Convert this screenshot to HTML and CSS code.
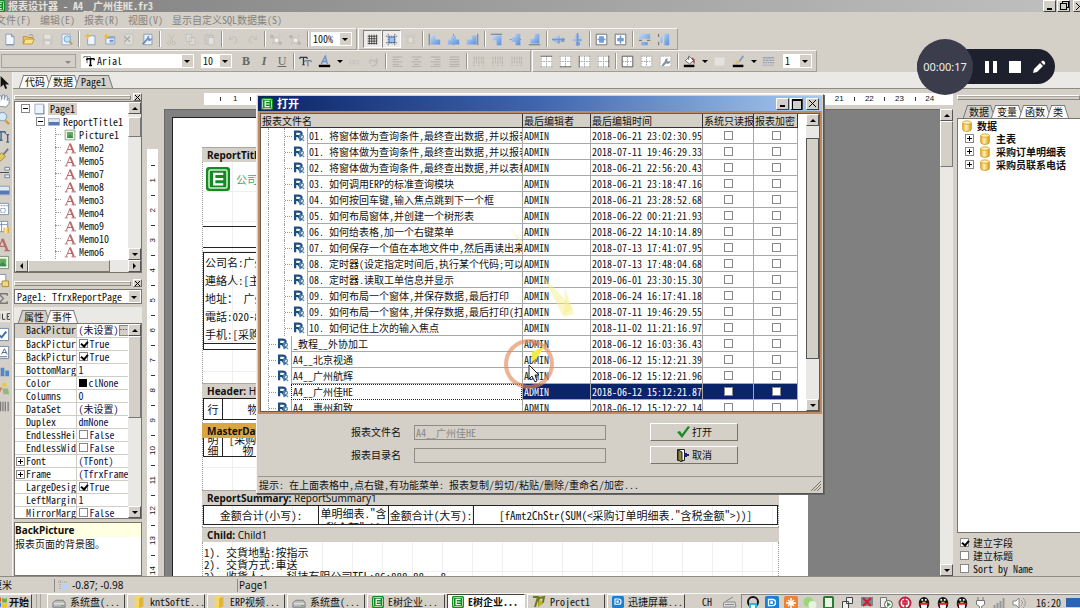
FILE: index.html
```html
<!DOCTYPE html>
<html lang="zh-CN">
<head>
<meta charset="utf-8">
<title>报表设计器 - A4__广州佳HE.fr3</title>
<link rel="stylesheet" href="styles.css">
</head>
<body>
<svg class="defs" aria-hidden="true">
  <defs>
    <linearGradient id="blue" x1="0" y1="0" x2="1" y2="1"><stop offset="0" stop-color="#c3daf7"/><stop offset="1" stop-color="#5a8fdc"/></linearGradient>
    <linearGradient id="gold" x1="0" y1="0" x2="1" y2="0"><stop offset="0" stop-color="#e9ab2e"/><stop offset=".4" stop-color="#fff0b0"/><stop offset="1" stop-color="#dc9a1c"/></linearGradient>
  </defs>
  <symbol id="logo" viewBox="0 0 16 16"><rect width="16" height="16" rx="2" fill="#138a22"/><rect x="2" y="2" width="12" height="12" rx="1" fill="none" stroke="#d8f0d0"/><path d="M11.500 4.500h-6v7h6M5.500 8h6" fill="none" stroke="#fff" stroke-width="1.500"/></symbol>
  <symbol id="new" viewBox="0 0 16 16"><path d="M3.500 1.500h7l3 3v10h-10z" fill="#f3f8fe" stroke="#7e93b4"/><path d="M10.500 1.500v3h3M4 14.500h9" fill="none" stroke="#5f83bd"/></symbol>
  <symbol id="page" viewBox="0 0 16 16"><path d="M2.500 1.500h12v13h-12z" fill="#eef4fb" stroke="#8a9bb5"/><path d="M3 14.500h12M14.500 3v12" stroke="#5f7fae"/></symbol>
  <symbol id="open" viewBox="0 0 16 16"><path d="M1.500 13.500v-9h5l1 1h6v2" fill="#f5cb58" stroke="#ad8530"/><path d="M1.500 13.500l2.500-6h11l-2.500 6z" fill="#ffe18a" stroke="#b98d30"/><path d="M9 3c2-2 4-1 5 1" fill="none" stroke="#6a86b8"/></symbol>
  <symbol id="save" viewBox="0 0 16 16"><path d="M2 2h12v12H2z" fill="#c9c7c2"/><path d="M4 2h8v5H4zM5 10h6v4H5z" fill="#e6e4df"/></symbol>
  <symbol id="preview" viewBox="0 0 16 16"><path d="M2.500 1.500h10v13h-10z" fill="#edf4fc" stroke="#94a5be"/><circle cx="9" cy="7.500" r="4" fill="#bfe2f8" stroke="#6d9cc4"/><path d="M12 10.500l3 3.500" stroke="#c99644" stroke-width="2"/></symbol>
  <symbol id="addpage" viewBox="0 0 16 16"><path d="M4.500 3.500h9v11h-9z" fill="#eef5fd" stroke="#7f93b3"/><path d="M1 4h7M4.500.5v7" stroke="#eebf3c" stroke-width="2"/></symbol>
  <symbol id="adddlg" viewBox="0 0 16 16"><path d="M3.500 4.500h11v9h-11z" fill="#eef5fd" stroke="#7f93b3"/><path d="M4 6h10M8 9h5M8 11h5" stroke="#6b93d2" stroke-width="1.500"/><path d="M1 4h6M4 1v6" stroke="#eebf3c" stroke-width="2"/></symbol>
  <symbol id="delpage" viewBox="0 0 16 16"><path d="M3.500 1.500h10v13h-10z" fill="#dedcd7" stroke="#c2c0ba"/><path d="M3 4l7 7M10 4l-7 7" stroke="#aaa8a2" stroke-width="1.500"/></symbol>
  <symbol id="setup" viewBox="0 0 16 16"><path d="M3.500 1.500h10v13h-10z" fill="#eaf2fb" stroke="#7f93b3"/><path d="M2 14l6-7" stroke="#6887b8" stroke-width="2"/><path d="M7 8l1-4 2-1v3l2 1 2-1-1 3-3 1z" fill="#7397cc"/></symbol>
  <symbol id="cut" viewBox="0 0 16 16"><path d="M5 2l5 9M11 2L6 11" stroke="#bdbbb5"/><circle cx="5" cy="12.500" r="2" fill="none" stroke="#bdbbb5"/><circle cx="11" cy="12.500" r="2" fill="none" stroke="#bdbbb5"/></symbol>
  <symbol id="copy" viewBox="0 0 16 16"><path d="M2.500 1.500h7v9h-7zM6.500 5.500h7v9h-7z" fill="#dddbd6" stroke="#bfbdb7"/></symbol>
  <symbol id="paste" viewBox="0 0 16 16"><path d="M2.500 2.500h10v11h-10z" fill="#cfcdc8" stroke="#bfbdb7"/><path d="M6.500 5.500h7v9h-7z" fill="#e4e2de" stroke="#bfbdb7"/></symbol>
  <symbol id="undo" viewBox="0 0 16 16"><path d="M3 4v4h4M3 8c3-5 9-4 9 1 0 2-1 3-3 4" fill="none" stroke="#c4c2bc" stroke-width="1.500"/></symbol>
  <symbol id="redo" viewBox="0 0 16 16"><path d="M13 4v4H9M13 8c-3-5-9-4-9 1 0 2 1 3 3 4" fill="none" stroke="#c4c2bc" stroke-width="1.500"/></symbol>
  <symbol id="group" viewBox="0 0 16 16"><path d="M1 3h3v3H1zM11 11h3v3h-3zM11 3h2M3 12v2" fill="#b8b6b0" stroke="#b8b6b0"/><path d="M5 6h6v6H5z" fill="#f0eeea" stroke="#b8b6b0"/></symbol>
  <symbol id="grid" viewBox="0 0 16 16"><path d="M4 2v12M7 2v12M10 2v12M13 2v12M2 4h12M2 7h12M2 10h12M2 13h12" stroke="#333"/></symbol>
  <symbol id="snap" viewBox="0 0 16 16"><path d="M5 5h7v7H5z" fill="#9cc0ef" stroke="#416fae"/><path d="M4 1v14M12 1v14M1 4h14M1 12h14" stroke="#4b5b75" stroke-dasharray="2 1"/></symbol>
  <symbol id="fit" viewBox="0 0 16 16"><path d="M5 5h6v7H5z" fill="#e0ded9" stroke="#c2c0ba"/><path d="M2 3h12M3 1v13M13 1v13" stroke="#c2c0ba" stroke-dasharray="2 2"/></symbol>
  <symbol id="al" viewBox="0 0 16 16"><path d="M1.500 1v14" stroke="#4d6180"/><path d="M3 3h6v5H3zM3 8h12v6H3z" fill="url(#blue)"/></symbol>
  <symbol id="ac" viewBox="0 0 16 16"><path d="M8 1v14" stroke="#5a7fb5"/><path d="M5 3h6v5H5zM1 8h14v6H1z" fill="url(#blue)"/></symbol>
  <symbol id="ar" viewBox="0 0 16 16"><path d="M14.500 1v14" stroke="#4d6180"/><path d="M7 3h6v5H7zM1 8h12v6H1z" fill="url(#blue)"/></symbol>
  <symbol id="at" viewBox="0 0 16 16"><path d="M1 1.500h14" stroke="#4d6180"/><path d="M3 3h5v6H3zM8 3h6v12H8z" fill="url(#blue)"/></symbol>
  <symbol id="am" viewBox="0 0 16 16"><path d="M1 8h14" stroke="#5a7fb5"/><path d="M3 5h5v6H3zM8 1h6v14H8z" fill="url(#blue)"/></symbol>
  <symbol id="ab" viewBox="0 0 16 16"><path d="M1 14.500h14" stroke="#4d6180"/><path d="M3 7h5v6H3zM8 1h6v12H8z" fill="url(#blue)"/></symbol>
  <symbol id="sh" viewBox="0 0 16 16"><path d="M2 5h3v6H2zM6 3h4v10H6zM11 6h4v5h-4z" fill="url(#blue)"/><path d="M0 8h16" stroke="#7297cd" stroke-width="2"/></symbol>
  <symbol id="sv" viewBox="0 0 16 16"><path d="M5 2h5v4H5zM2 7h11v3H2zM6 11h5v4H6z" fill="url(#blue)"/><path d="M8 0v16" stroke="#7297cd" stroke-width="2"/></symbol>
  <symbol id="ch" viewBox="0 0 16 16"><path d="M1.500 1.500h13v13h-13z" fill="#fff" stroke="#58606d"/><path d="M5 4h6v8H5zM3 7h10v2H3z" fill="#6f9ddd"/></symbol>
  <symbol id="cv" viewBox="0 0 16 16"><path d="M1.500 1.500h13v13h-13z" fill="#fff" stroke="#58606d"/><path d="M4 6h8v4H4zM7 3h2v10H7z" fill="#6f9ddd"/></symbol>
  <symbol id="sw" viewBox="0 0 16 16"><path d="M1 1h14v6H1zM4 11h8v4H4z" fill="url(#blue)"/><path d="M1 9h4M11 9h4" stroke="#555"/></symbol>
  <symbol id="shh" viewBox="0 0 16 16"><path d="M9 1h6v14H9zM4 4h3v8H4z" fill="url(#blue)"/><path d="M2 1v4M2 11v4" stroke="#555"/></symbol>
  <symbol id="tt" viewBox="0 0 16 16"><path d="M1 3h9M5.500 3v9M1 3v2M10 3v2M4 12h3" fill="none" stroke="#2c3646" stroke-width="1.500"/><path d="M7 7h8M11 7v7M7 7v2M15 7v2" fill="none" stroke="#69819f" stroke-width="1.500"/></symbol>
  <symbol id="ttf" viewBox="0 0 16 16"><path d="M1 2h9M5.500 2v9M1 2v2M10 2v2" fill="none" stroke="#888" stroke-width="1.500"/><path d="M5 5h10M10 5v9M5 5v2M15 5v2M8 14h4" fill="none" stroke="#000" stroke-width="2"/></symbol>
  <symbol id="fc" viewBox="0 0 16 16"><path d="M4 11L9 1.500 11.500 11M5.500 8H11" fill="none" stroke="#6b93cb" stroke-width="1.800"/><path d="M1 12h14v3H1z"/></symbol>
  <symbol id="hl" viewBox="0 0 16 16"><path d="M2 7h5v4H2zM8 7h5v4H8z" fill="none" stroke="#c3c1bb"/></symbol>
  <symbol id="rot" viewBox="0 0 16 16"><path d="M4 11c-2-4 1-6 3-4s3 1 5-2c2 6-3 10-7 8" fill="none" stroke="#bcbab4" stroke-width="1.500"/></symbol>
  <symbol id="tl" viewBox="0 0 16 16"><path d="M2 2.500h12M2 5.500h7M2 8.500h12M2 11.500h8M2 14h12" stroke="#aaa8a2"/></symbol>
  <symbol id="tc" viewBox="0 0 16 16"><path d="M2 2.500h12M5 5.500h6M2 8.500h12M5 11.500h6M2 14h12" stroke="#aaa8a2"/></symbol>
  <symbol id="tr" viewBox="0 0 16 16"><path d="M2 2.500h12M7 5.500h7M2 8.500h12M6 11.500h8M2 14h12" stroke="#aaa8a2"/></symbol>
  <symbol id="tj" viewBox="0 0 16 16"><path d="M2 2.500h12M2 5.500h12M2 8.500h12M2 11.500h12M2 14h12" stroke="#aaa8a2"/></symbol>
  <symbol id="vt" viewBox="0 0 16 16"><path d="M2.500 2v12M5.500 2v8M8.500 2v12M11.500 2v8M14 2v12" stroke="#b0aea8" stroke-dasharray="4 1"/></symbol>
  <symbol id="bd" viewBox="0 0 16 16"><path d="M1 1h14v14H1z" fill="#fff"/><path d="M1 8h14M8 1v14M1.500 1v14M14.500 1v14M1 14.500h14" stroke="#999" stroke-dasharray="2 1"/><path d="M1 1.500h14" stroke="#444"/></symbol>
  <symbol id="bb" viewBox="0 0 16 16"><path d="M1 1h14v14H1z" fill="#fff"/><path d="M1 8h14M8 1v14M1.500 1v14M14.500 1v14M1 1.500h14" stroke="#999" stroke-dasharray="2 1"/><path d="M1 14.500h14" stroke="#444"/></symbol>
  <symbol id="bl" viewBox="0 0 16 16"><path d="M1 1h14v14H1z" fill="#fff"/><path d="M1 8h14M8 1v14M14.500 1v14M1 1.500h14M1 14.500h14" stroke="#999" stroke-dasharray="2 1"/><path d="M1.500 1v14" stroke="#444"/></symbol>
  <symbol id="br" viewBox="0 0 16 16"><path d="M1 1h14v14H1z" fill="#fff"/><path d="M1 8h14M8 1v14M1.500 1v14M1 1.500h14M1 14.500h14" stroke="#999" stroke-dasharray="2 1"/><path d="M14.500 1v14" stroke="#444"/></symbol>
  <symbol id="ba" viewBox="0 0 16 16"><path d="M1.500 1.500h13v13h-13z" fill="#fff" stroke="#444"/><path d="M2 8h12M8 2v12" stroke="#999" stroke-dasharray="2 1"/></symbol>
  <symbol id="bn" viewBox="0 0 16 16"><path d="M1.500 1.500h13v13h-13zM2 8h12M8 2v12" fill="#fff" stroke="#999" stroke-dasharray="2 1"/></symbol>
  <symbol id="be" viewBox="0 0 16 16"><path d="M1.500 1.500h13v13h-13z" fill="#fff" stroke="#aaa" stroke-dasharray="2 1"/><path d="M3 13l4-5 1-3 3-1-1 3 2 1 2-1-1 3-3 1-1-1-4 4z" fill="#8791a4"/></symbol>
  <symbol id="bucket" viewBox="0 0 16 16"><path d="M3 7l5-5 5 5-5 4z" fill="#fff" stroke="#555"/><path d="M7 1v5" stroke="#555"/><path d="M11 3c4 1 4 4 3 8-2-1-1-4-3-6z" fill="#a04a4a"/><path d="M1 12h13v3H1z"/></symbol>
  <symbol id="brush" viewBox="0 0 16 16"><path d="M14 1l-5 7" stroke="#7f9ab8" stroke-width="2"/><path d="M4 11c1-4 3-5 5-3s1 3-5 3z" fill="#d9c46c"/><path d="M1 12h13v3H1z"/></symbol>
  <symbol id="lines" viewBox="0 0 16 16"><path d="M1 3.500h14" stroke="#6d7fae"/><path d="M1 6.500h14" stroke="#6d7fae" stroke-dasharray="3 1"/><path d="M1 9.500h14" stroke="#6d7fae" stroke-dasharray="2 1"/><path d="M1 12.500h14" stroke="#6d7fae" stroke-dasharray="1 1"/></symbol>
  <symbol id="fill2" viewBox="0 0 16 16"><path d="M2 3h12v10H2z" fill="#e4e2de"/></symbol>
  <symbol id="cursor" viewBox="0 0 16 16"><path d="M6 1v12l3-3 2 5 2-1-2-4h4z" fill="#111"/></symbol>
  <symbol id="hand" viewBox="0 0 16 16"><path d="M4 14L2 8l2-1 1 2V3h2v4l1-5h2v5l1-4h2v5l1-2h1v5l-3 4z" fill="#fff" stroke="#8290a8"/></symbol>
  <symbol id="glass" viewBox="0 0 16 16"><circle cx="8" cy="6" r="4.500" fill="#d5ebfa" stroke="#7b93ae"/><path d="M11 10l4 4" stroke="#d39a3a" stroke-width="2.500"/></symbol>
  <symbol id="ti" viewBox="0 0 16 16"><path d="M2 3h9M6.500 3v9M2 3v2M11 3v2M5 12h3M12 6h3M12 14h3M13.500 6v8" fill="none" stroke="#40658f" stroke-width="1.500"/></symbol>
  <symbol id="paint" viewBox="0 0 16 16"><path d="M14 2L9 8" stroke="#6f7780" stroke-width="2"/><path d="M2 12l5-6 4 4-5 5z" fill="#ddc95c" stroke="#9b8c3c"/></symbol>
  <symbol id="band" viewBox="0 0 16 16"><path d="M.5 3.500h15v9H.5z" fill="#dfe9f6" stroke="#8c9cb6"/><path d="M1 8h14v4H1z" fill="#5579b4"/></symbol>
  <symbol id="insert" viewBox="0 0 16 16"><path d="M10.500 2.500h5v3h-5zM10.500 10.500h5v3h-5z" fill="#eaf2fb" stroke="#6e7f99"/><path d="M1 8h14M4 6v4" stroke="#444"/></symbol>
  <symbol id="box" viewBox="0 0 16 16"><path d="M2.500 2.500h12v12h-12z" fill="#fff" stroke="#7890b0"/><path d="M3 5h11M6 8h5v4H6z" fill="none" stroke="#7890b0" stroke-dasharray="2 1"/></symbol>
  <symbol id="dbox" viewBox="0 0 16 16"><path d="M2.500 2.500h11v11h-11z" fill="#fff" stroke="#7890b0"/><path d="M3 6h10M7 3v10" stroke="#7890b0"/><path d="M9 9h6v6H9z" fill="url(#gold)"/></symbol>
  <symbol id="memo" viewBox="0 0 16 16"><path d="M3 14L8 2M5 10h6M1 14.500h4M10 14.500h6" fill="none" stroke="#b96b6b" stroke-width="1.300"/><path d="M8 2l5 12" stroke="#b96b6b" stroke-width="2.600"/></symbol>
  <symbol id="pic" viewBox="0 0 16 16"><path d="M1.500 1.500h13v13h-13z" fill="#eef6ea" stroke="#77906e"/><path d="M4 4h8v8H4z" fill="#69a95c"/><path d="M4 12l4-5 4 4v1z" fill="#3d8c56"/></symbol>
  <symbol id="sub" viewBox="0 0 16 16"><path d="M3.500 1.500h8v10h-8z" fill="#fff" stroke="#7d8ea7"/><path d="M7.500 8.500h7v6h-7z" fill="#f2d680" stroke="#a68b3b"/></symbol>
  <symbol id="sigma" viewBox="0 0 16 16"><path d="M13 5V3H4l5 5-5 5h9v-2" fill="none" stroke="#777" stroke-width="1.500"/></symbol>
  <symbol id="ole" viewBox="0 0 16 16"><path d="M0 2h16v12H0z" fill="#e9e7e2"/><path d="M2 5h3v6H2zM8 5v6h3M16 5h-3v6h3M13 8h2" fill="none" stroke="#333"/></symbol>
  <symbol id="chk" viewBox="0 0 16 16"><path d="M1.500 1.500h13v13h-13z" fill="#fff" stroke="#6c88ab"/><path d="M4 8l3 3 5-6" fill="none" stroke="#3b6ba4" stroke-width="2"/></symbol>
  <symbol id="rich" viewBox="0 0 16 16"><path d="M1.500 1.500h13v13h-13z" fill="#fff" stroke="#6c88ab"/><path d="M7 10l3-6 3 6M8 8h4M4 12.500h9" fill="none" stroke="#567"/></symbol>
  <symbol id="chart" viewBox="0 0 16 16"><path d="M1 2h4v12H1zM6 5h4v9H6zM11 8h4v6h-4z" fill="#5087c5"/></symbol>
  <symbol id="shape" viewBox="0 0 16 16"><path d="M2 7h6l-3 6z" fill="#d77a5c"/><circle cx="10" cy="4" r="2.500" fill="#e8c94a"/><path d="M8 8h6l1 6H9z" fill="#91b87a"/></symbol>
  <symbol id="bar" viewBox="0 0 16 16"><path d="M3.500 3v10M6 3v10M8.500 3v10M11 3v10M14 3v10" stroke="#777" stroke-width="1.300"/></symbol>
  <symbol id="rr" viewBox="0 0 14 14"><path d="M2.500 12V2H7c4 0 4 5 0 5H3M6 7l4 5" fill="none" stroke="#1d4c7d" stroke-width="2.600"/><path d="M8 13V6h2c3 0 3 4 0 4M10 10l3 3" fill="none" stroke="#5d8bb5" stroke-width="1.500"/></symbol>
  <symbol id="db" viewBox="0 0 14 14"><path d="M2 3v8c0 3 10 3 10 0V3z" fill="url(#gold)" stroke="#cc9426"/><ellipse cx="7" cy="3" rx="5" ry="2" fill="#fff0b8" stroke="#d6a130"/></symbol>
  <symbol id="folder" viewBox="0 0 16 16"><path d="M3 1h7v14H3z" fill="#f4d66c"/><path d="M8 4l5-2v11l-5 2z" fill="#e2b43c"/></symbol>
  <symbol id="disk" viewBox="0 0 16 16"><path d="M1 9l3-3h9l2 3v5H1z" fill="#b9bcbc" stroke="#777"/><path d="M2 10h12" stroke="#f4f4f4"/><path d="M11 12h2" stroke="#3c9a3c"/></symbol>
  <symbol id="penguin" viewBox="0 0 16 16"><ellipse cx="8" cy="8.500" rx="6" ry="7.500" fill="#151515"/><ellipse cx="8" cy="11" rx="3.500" ry="4" fill="#fff"/><path d="M5 4.500h2M9 4.500h2" stroke="#fff" stroke-width="2"/><path d="M3 8h10v2H3z" fill="#d22"/><path d="M6 6.500h4v1H6z" fill="#f2a51c"/></symbol>
  <symbol id="rec" viewBox="0 0 16 16"><rect width="16" height="16" rx="2" fill="#1d7fd0"/><path d="M4 4h5c4 0 4 7 0 7H4z" fill="none" stroke="#fff" stroke-width="1.500"/><path d="M6 6h3v3H6z" fill="#fff"/></symbol>
</svg>

<div class="app">
  <header class="titlebar">
    <svg class="i12"><use href="#logo"/></svg>
    <h1>报表设计器 - A4__广州佳HE.fr3</h1>
    <span class="winbtns"><button class="wb min" aria-label="最小化"></button><button class="wb rest" aria-label="还原"></button><button class="wb shut" aria-label="关闭"></button></span>
  </header>
  <nav class="menubar"><button>文件(F)</button><button>编辑(E)</button><button>报表(R)</button><button>视图(V)</button><button>显示自定义SQL数据集(S)</button></nav>

  <div class="toolrow">
    <div class="toolbar" data-icons="new open save preview | addpage adddlg delpage setup | cut copy paste | undo redo | group group |"><label class="combo zoomsel"><select aria-label="缩放"><option>100%</option></select></label></div>
    <div class="toolbar" data-icons="grid snap fit | al ac ar | at am ab | sh sv | ch cv | sw shh"></div>
  </div>
  <div class="toolrow">
    <div class="toolbar">
      <label class="combo style off"><select aria-label="样式" disabled><option></option></select></label>
      <label class="combo font"><svg class="i12"><use href="#ttf"/></svg><select aria-label="字体"><option>Arial</option></select></label>
      <label class="combo size"><select aria-label="字号"><option>10</option></select></label>
      <button class="tb letter b" aria-label="粗体">B</button><button class="tb letter i" aria-label="斜体">I</button><button class="tb letter u" aria-label="下划线">U</button>
      <span class="tools" data-icons="| tt fc v hl rot | tl tc tr tj | vt vt vt"></span>
    </div>
    <div class="toolbar">
      <span class="tools" data-icons="bd bb bl br | ba bn be | bucket v fill2 brush v lines"></span>
      <label class="combo width"><select aria-label="线宽"><option>1</option></select></label>
    </div>
  </div>

  <div class="work">
    <div class="palette" data-tools="cursor hand glass ti paint insert band box dbox memo pic sub sigma ole chk rich chart shape bar"></div>
    <div class="content">
      <div class="pagetabs"><button class="tab">代码</button><button class="tab">数据</button><button class="tab on">Page1</button></div>
      <div class="panes">
        <aside class="left">
          <div class="grip"><i></i><button class="shut" aria-label="关闭"></button></div>
          <div class="treebox">
            <div class="treemain">
              <ul class="tree" id="objtree"></ul>
              <div class="vs objs"><button class="up" aria-label="上"></button><i class="thumb"></i><button class="down" aria-label="下"></button></div>
            </div>
            <div class="hs"><button class="lt" aria-label="左"></button><i class="thumb"></i><button class="rt" aria-label="右"></button></div>
          </div>
          <div class="grip second"><i></i><button class="shut" aria-label="关闭"></button></div>
          <label class="combo object"><select aria-label="对象"><option>Page1: TfrxReportPage</option></select></label>
          <div class="smalltabs"><button class="tab on">属性</button><button class="tab">事件</button></div>
          <div class="inspector">
            <table class="props" id="props"></table>
            <div class="vs insp"><button class="up" aria-label="上"></button><i class="thumb"></i><button class="down" aria-label="下"></button></div>
          </div>
          <div class="hint"><b>BackPicture</b><p>报表页面的背景图。</p></div>
        </aside>

        <main class="design">
          <div class="hruler" id="hruler"></div>
          <div class="vruler" id="vruler"></div>
          <div class="canvas">
            <div class="paper">
              <div class="band"><b>ReportTitle:</b> ReportTitle1</div>
              <div class="bandbody title">
                <div class="brand"><svg><use href="#logo"/></svg><span>公司</span></div>
                <div class="blankrow"></div>
                <div class="contact"><p>公司名:广州</p><p>連絡人:[主表</p><p>地址： 广州市</p><p>電話:020-8</p><p>手机:[采购订</p></div>
              </div>
              <div class="band"><b>Header:</b> Header1</div>
              <div class="bandbody head"><div class="cells"><span class="no">行</span><span class="item">物</span></div></div>
              <div class="band master"><b>MasterData:</b> MasterData1</div>
              <div class="bandbody detail"><div class="cells"><span class="no">明细</span><span class="item">[采购订<br>物</span></div></div>
              <div class="band"><b>ReportSummary:</b> ReportSummary1</div>
              <div class="bandbody sum"><div class="cells"><span class="c1">金额合计(小写):</span><span class="c2">单明细表."含税金额">)]</span><span class="c3">金额合计(大写):</span><span class="c4">[fAmt2ChStr(SUM(&lt;采购订单明细表."含税金额"&gt;))]</span></div></div>
              <div class="band"><b>Child:</b> Child1</div>
              <div class="bandbody child"><p>1). 交貨地點:按指示</p><p>2). 交貨方式:車送</p><p>3). 收貨人:    科技有限公司TEL:86:888-88   8</p></div>
            </div>
          </div>
          <div class="vs page"><button class="up" aria-label="上"></button><i class="thumb"></i><button class="down" aria-label="下"></button></div>
        </main>

        <aside class="right">
          <div class="grip"><i></i></div>
          <div class="smalltabs"><button class="tab on">数据</button><button class="tab">变量</button><button class="tab">函数</button><button class="tab">类</button></div>
          <ul class="datatree">
            <li class="root"><svg class="i14"><use href="#db"/></svg>数据</li>
            <li><i class="pm plus"></i><svg class="i14"><use href="#db"/></svg>主表</li>
            <li><i class="pm plus"></i><svg class="i14"><use href="#db"/></svg>采购订单明细表</li>
            <li><i class="pm plus"></i><svg class="i14"><use href="#db"/></svg>采购员联系电话</li>
          </ul>
          <div class="opts"><label><input type="checkbox" checked>建立字段</label><label><input type="checkbox">建立标题</label><label><input type="checkbox">Sort by Name</label></div>
        </aside>
      </div>
    </div>
  </div>

  <footer class="status"><span class="unit">厘米</span><span class="pos"><svg class="i12"><path d="M1 3h10M3 1v10" stroke="#999" stroke-dasharray="1 1"/><rect x="5" y="5" width="6" height="6" rx="2" fill="#b9d2f2"/></svg>-0.87; -0.98</span><span class="pg">Page1</span></footer>

  <footer class="taskbar">
    <button class="start"><svg class="i14" viewBox="0 0 14 14"><path d="M1 3c2-2 4-1 5 0v4c-1-1-3-1-5 0z" fill="#e05a2b"/><path d="M7 3c2 1 4 1 5 0v4c-1 1-3 1-5 0z" fill="#6bb13c"/><path d="M1 8c2-1 4-1 5 0v4c-1-1-3-1-5 0z" fill="#3c7fd0"/><path d="M7 8c2 1 4 1 5 0v4c-1 1-3 1-5 0z" fill="#f1c232"/></svg>开始</button>
    <span class="tsep"></span>
    <button class="task"><svg class="i14"><use href="#disk"/></svg>系统盘(...</button>
    <button class="task"><svg class="i14"><use href="#folder"/></svg>kntSoftE...</button>
    <button class="task"><svg class="i14"><use href="#folder"/></svg>ERP视频...</button>
    <button class="task"><svg class="i14"><use href="#disk"/></svg>系统盘(...</button>
    <button class="task"><svg class="i12"><use href="#logo"/></svg>E树企业...</button>
    <button class="task cur"><svg class="i12"><use href="#logo"/></svg>E树企业...</button>
    <button class="task"><svg class="i14" viewBox="0 0 14 14"><path d="M1 2h5L3 12M7 3l5-1-1 5-4 3z" fill="none" stroke="#6a7a18" stroke-width="2"/><path d="M7 4l4 4-5 4z" fill="#c8b22a"/></svg>Project1</button>
    <button class="task"><svg class="i12"><use href="#rec"/></svg>迅捷屏幕...</button>
    <span class="lang">CH</span>
    <svg class="i14 kbd" viewBox="0 0 14 14"><path d="M1 7h11l1 5H0z" fill="#ddd" stroke="#888"/><path d="M3 6l7-4M2 9.500h9" stroke="#888"/></svg>
    <div class="tray">
      <svg class="i14" viewBox="0 0 14 14"><circle cx="7" cy="6" r="5" fill="none" stroke="#111" stroke-width="2"/><path d="M3 7h8v6H3z" fill="#35b4d8"/><path d="M5 9h4v3H5z" fill="#fff"/></svg>
      <svg class="i14"><use href="#rec"/></svg>
      <svg class="i14" viewBox="0 0 14 14"><rect width="14" height="14" rx="2" fill="#e98435"/><path d="M7 2v10M2 7h10M4 4l6 6M10 4l-6 6" stroke="#fff" stroke-width="1.500"/></svg>
      <svg class="i14" viewBox="0 0 14 14"><circle cx="5.500" cy="6" r="5" fill="#9bd67c"/><circle cx="9.500" cy="9" r="4" fill="#e6f3df"/></svg>
      <svg class="i14" viewBox="0 0 14 14"><rect x="2" y="1" width="9" height="11" rx="1" fill="#e8f4e6" stroke="#257a35" stroke-width="2"/></svg>
      <svg class="i14" viewBox="0 0 14 14"><path d="M5.500 1.500h6v6h-6zM1.500 5.500h6v7h-6z" fill="#eee" stroke="#444"/></svg>
      <svg class="i14" viewBox="0 0 14 14"><path d="M1 1h12v9H1z" fill="#7c8a90"/><path d="M3 2l8 8M11 2l-8 8" stroke="#d01c2c" stroke-width="2"/></svg>
      <svg class="i14" viewBox="0 0 14 14"><path d="M1.500 1.500h6v10h-6z" fill="#eee" stroke="#777"/><circle cx="9.500" cy="8.500" r="4" fill="#fff" stroke="#555"/><path d="M8 6l4 2.500L8 11z" fill="#2c9a3a"/></svg>
      <svg class="i14" viewBox="0 0 14 14"><circle cx="7" cy="7" r="5.500" fill="#fff" stroke="#c22040" stroke-width="2"/><path d="M5 5h4v3H5zM7 2v10" fill="none" stroke="#c22040" stroke-width="1.500"/></svg>
      <svg class="i14"><use href="#penguin"/></svg><svg class="i14"><use href="#penguin"/></svg><svg class="i14"><use href="#penguin"/></svg>
      <svg class="i14" viewBox="0 0 14 14"><path d="M4 1v4M9 1v4M2.500 4.500h8v4l-3 2v3h-2v-3l-3-2z" fill="#fff" stroke="#777"/></svg>
      <svg class="i14" viewBox="0 0 14 14"><path d="M1.500 9v4M4.500 7v6M7.500 5v8M10.500 2v11" stroke="#999" stroke-width="2"/></svg>
      <svg class="i14" viewBox="0 0 14 14"><path d="M1 5h3l3-3v10L4 9H1z" fill="#fff" stroke="#888"/><path d="M9 4c2 2 2 4 0 6M11 2c3 3 3 7 0 10" fill="none" stroke="#999"/></svg>
      <time>16:20</time>
      <svg class="i14" viewBox="0 0 14 14"><path d="M0 2h14v9H0z" fill="#2c62b8"/></svg>
    </div>
  </footer>

  <section class="dialog" role="dialog" aria-label="打开">
    <header><svg class="i12"><use href="#logo"/></svg><h2>打开</h2><span class="winbtns"><button class="wb min" aria-label="最小化"></button><button class="wb max" aria-label="最大化"></button><button class="wb shut" aria-label="关闭"></button></span></header>
    <div class="frame">
      <div class="scroller">
        <table class="files">
          <colgroup><col class="k1"><col class="k2"><col class="k3"><col class="k4"><col class="k5"></colgroup>
          <thead><tr><th>报表文件名</th><th>最后编辑者</th><th>最后编辑时间</th><th>系统只读报</th><th>报表加密</th></tr></thead>
          <tbody id="files"></tbody>
        </table>
      </div>
      <div class="vs dlg"><button class="up" aria-label="上"></button><i class="thumb"></i><button class="down" aria-label="下"></button></div>
    </div>
    <form class="form">
      <label for="fname">报表文件名</label><input id="fname" value="A4__广州佳HE" disabled>
      <button type="button"><svg class="i14" viewBox="0 0 14 14"><path d="M1 7l3-1 2 3 6-8 2 1-8 11z" fill="#1e8a2c"/></svg>打开</button>
      <label for="dname">报表目录名</label><input id="dname" disabled>
      <button type="button"><svg class="i14" viewBox="0 0 14 14"><path d="M1.500 1.500h7v11h-7z" fill="#fff" stroke="#222"/><path d="M2 2l4 2v10l-4-2z" fill="#8d8a32" stroke="#222"/><path d="M8 7h5M10 5v4" stroke="#16208c" stroke-width="2"/></svg>取消</button>
    </form>
    <p class="tip">提示: 在上面表格中,点右键,有功能菜单: 报表复制/剪切/粘贴/删除/重命名/加密...</p>
    <svg class="sizegrip" viewBox="0 0 10 10"><path d="M0 10L10 0M3 10l7-7M6 10l4-4" stroke="#77756f"/></svg>
  </section>

  <svg class="pointer" viewBox="0 0 84 170" aria-hidden="true"><path d="M5 2l17 18-2 2zM40 52l20 40 10-8z" fill="#f5f08a" opacity=".5"/><path d="M62 64l9 26-10 3z" fill="#f5f08a" opacity=".5"/><circle cx="26" cy="140" r="23" fill="none" stroke="#e58a5c" stroke-opacity=".65" stroke-width="4"/><path d="M29 128l13-6-9 13-5 3z" fill="#f2ec4a"/><path d="M26 141v14l3-3 3 6 2-1-2-6h4z" fill="#fff" stroke="#222"/></svg>

  <div class="recorder">
    <div class="clock">00:00:17</div>
    <button aria-label="暂停"><svg viewBox="0 0 14 14"><path d="M1 1h4v12H1zM9 1h4v12H9z" fill="#fff"/></svg></button>
    <button aria-label="停止"><svg viewBox="0 0 14 14"><path d="M1 1h12v12H1z" fill="#fff"/></svg></button>
    <button aria-label="画笔"><svg viewBox="0 0 14 14"><path d="M1 13l1-4 6-6 3 3-6 6zM9 2l1-1c1-1 4 1 3 3l-1 1z" fill="#fff"/></svg></button>
  </div>
</div>
<script src="script.js"></script>
</body>
</html>
```
FILE: styles.css
```css
* { box-sizing: border-box; margin: 0; padding: 0; }
html, body { height: 100%; overflow: hidden; }
body {
  background: #d4d0c8; color: #111;
  font: 10px/12px "Noto Sans Mono CJK SC", "Noto Sans CJK SC", monospace;
  font-feature-settings: "hwid";
}
button, input, select { font: inherit; font-feature-settings: inherit; color: inherit; border: 0; background: none; border-radius: 0; }
ul { list-style: none; }
svg { flex: none; display: block; }
.defs { position: absolute; width: 0; height: 0; }
.i12 { width: 12px; height: 12px; }
.i14 { width: 14px; height: 14px; }
.app { position: relative; height: 100vh; display: flex; flex-direction: column; overflow: hidden; }

/* main window caption and menu */
.titlebar { flex: none; height: 12px; display: flex; align-items: center; background: linear-gradient(90deg, #808080, #c0c0c0); overflow: hidden; }
.titlebar .i12 { margin-left: -7px; }
.titlebar h1 { font-size: 10px; line-height: 12px; color: #e6e3dc; margin-left: 3px; flex: 1; white-space: pre; }
.winbtns { display: flex; gap: 1px; }
.wb { width: 13px; height: 12px; background: #d4d0c8; border: 1px solid; border-color: #fff #404040 #404040 #fff; display: grid; place-items: center; }
.min::before { content: ""; width: 5px; height: 2px; background: #000; margin-top: 5px; }
.max::before { content: ""; width: 8px; height: 8px; border: 1px solid #000; border-top-width: 2px; }
.rest::before { content: ""; width: 5px; height: 5px; border: 1px solid #000; box-shadow: 2px -2px 0 -1px #d4d0c8, 2px -2px 0 0 #000; }
.shut::before { content: ""; width: 7px; height: 7px; background: linear-gradient(45deg, transparent 44%, #000 44% 56%, transparent 56%), linear-gradient(-45deg, transparent 44%, #000 44% 56%, transparent 56%); }
.titlebar .winbtns { margin-right: -6px; }
.wb.shut { margin-left: 2px; }
.menubar { flex: none; height: 16px; display: flex; gap: 9px; align-items: center; margin-left: -4px; color: #85827c; }
.menubar button { white-space: nowrap; }

/* toolbars */
.toolrow { flex: none; height: 22px; display: flex; }
.toolbar { display: flex; align-items: center; height: 22px; padding-right: 4px; border: 1px solid; border-color: #f6f5f2 #a19e97 #a19e97 #f6f5f2; border-left: 0; }
.toolbar + .toolbar { padding-left: 4px; border-left: 1px solid #fff; margin-left: 1px; }
.tools { display: flex; align-items: center; }
.tb { width: 19px; height: 18px; display: grid; place-items: center; flex: none; }
.tb svg { width: 13px; height: 13px; }
.tb.held { background: #eeece8; border: 1px solid; border-color: #808080 #fff #fff #808080; }
.arrow { width: 11px; height: 18px; display: grid; place-items: center; }
.arrow::before { content: ""; border: 3px solid transparent; border-top-color: #000; border-bottom: 0; }
.sep { width: 5px; height: 16px; flex: none; background: linear-gradient(90deg, transparent 2px, #98958e 2px 3px, #fff 3px 4px, transparent 4px); }
.combo { position: relative; display: flex; align-items: center; height: 14px; background: #fff; flex: none; }
.combo select { appearance: none; width: 100%; height: 14px; padding-left: 2px; outline: 0; }
.combo::after { content: ""; position: absolute; right: 4px; top: 6px; border: 3px solid transparent; border-top-color: #000; border-bottom: 0; }
.combo::before { content: ""; position: absolute; right: 1px; top: 1px; bottom: 1px; width: 11px; background: #d4d0c8; }
.zoomsel { width: 41px; margin-left: 1px; }
.off { background: #d4d0c8; border: 1px solid #a5a29b; }
.combo.off::after { border-top-color: #888; }
.style { width: 75px; margin: 0 5px 0 1px; }
.font { width: 113px; padding-left: 2px; margin-right: 7px; }
.size { width: 31px; }
.width { width: 29px; margin-left: 5px; }
.letter { width: 18px; font: 700 12px/14px "Liberation Serif", serif; color: #666; }
.size + .letter { margin-left: 5px; }
.i { font-style: italic; }
.u { text-decoration: underline; font-weight: 400; }

/* workspace */
.work { flex: 1; min-height: 0; display: flex; }
.palette { flex: none; width: 13px; padding-top: 1px; overflow: hidden; display: flex; flex-direction: column; border-right: 1px solid #f4f3f0; }
.palette button { height: 18px; flex: none; display: flex; align-items: center; justify-content: flex-end; padding-right: 2px; }
.palette svg { width: 15px; height: 15px; }
.content { flex: 1; min-width: 0; display: flex; flex-direction: column; }
.pagetabs { flex: none; height: 17px; display: flex; align-items: flex-end; padding-left: 8px; background: #ebe9e5; border-bottom: 1px solid #8e8b85; margin-bottom: 4px; }
.tab { position: relative; z-index: 0; height: 13px; padding: 0 4px; line-height: 13px; white-space: nowrap; }
.tab::before, .tab::after { content: ""; position: absolute; z-index: -1; top: 0; bottom: 0; width: 50%; background: #fbfaf8; border-top: 1px solid #777; }
.tab::before { left: 0; border-left: 1px solid #777; transform: skewX(-18deg); }
.tab::after { right: 0; border-right: 1px solid #777; transform: skewX(18deg); }
.tab.on::before, .tab.on::after { background: #d4d0c8; }
.panes { flex: 1; min-height: 0; display: flex; }
.grip { flex: none; height: 8px; display: flex; gap: 2px; align-items: center; }
.grip i { flex: 1; height: 5px; border: 1px solid; border-color: #fff #8b8881 #8b8881 #fff; box-shadow: inset 0 1px #a8a59e; }
.grip button { width: 9px; height: 8px; border: 1px solid; border-color: #fff #666 #666 #fff; display: grid; place-items: center; }
.grip .shut::before { width: 5px; height: 5px; }

/* scrollbars */
.vs, .hs { display: flex; background: #eae8e4; flex: none; }
.vs { flex-direction: column; width: 13px; }
.hs { height: 12px; }
.vs button, .hs button { flex: none; width: 13px; height: 12px; background: #d4d0c8; border: 1px solid; border-color: #fff #555 #555 #fff; display: grid; place-items: center; }
.vs .thumb, .hs .thumb { background: #d4d0c8; border: 1px solid; border-color: #fff #777 #777 #fff; }
.up::before, .down::before { content: ""; border: 3px solid transparent; }
.up::before { border-bottom-color: #000; border-top: 0; }
.down::before { border-top-color: #000; border-bottom: 0; }
.lt::before, .rt::before { content: ""; border: 3px solid transparent; }
.lt::before { border-right-color: #000; border-left: 0; }
.rt::before { border-left-color: #000; border-right: 0; }
.vs .down { margin-top: auto; }
.hs .rt { margin-left: auto; }
.objs .thumb { height: 20px; margin-top: 3px; }
.hs .thumb { width: 82px; }
.insp .thumb { height: 82px; }
.page .thumb { height: 46px; }
.dlg .thumb { height: 221px; margin-top: 12px; border-color: #555; }

/* left side: object tree and inspector */
.left { flex: none; width: 129px; padding-left: 1px; display: flex; flex-direction: column; }
.treebox { flex: none; height: 172px; border: 1px solid #77746e; display: flex; flex-direction: column; margin-bottom: 6px; }
.treemain { flex: 1; min-height: 0; display: flex; background: #fff; }
.tree { flex: 1; overflow: hidden; background: repeating-linear-gradient(#999 0 1px, #fff 1px 2px) 25px 26px / 1px 100% no-repeat, repeating-linear-gradient(#999 0 1px, #fff 1px 2px) 40px 26px / 1px 100% no-repeat; }
.tree li { height: 13px; display: flex; align-items: center; gap: 3px; white-space: nowrap; }
.tree .n1 { padding-left: 6px; }
.tree .n2 { padding-left: 21px; }
.tree .n3 { padding-left: 40px; }
.tree .n3::before { content: ""; width: 6px; border-top: 1px dotted #999; }
.tree .on { background: #d4d0c8; padding: 0 2px; }
.tree svg { width: 12px; height: 12px; }
.pm { flex: none; width: 9px; height: 9px; border: 1px solid #888; background: linear-gradient(#000, #000) 1px 3px / 5px 1px no-repeat, #fff; }
.pm.plus { background: linear-gradient(#000, #000) 1px 3px / 5px 1px no-repeat, linear-gradient(#000, #000) 3px 1px / 1px 5px no-repeat, #fff; }
.object { height: 15px; margin: 2px 0 3px; border: 1px solid #77746e; }
.smalltabs { flex: none; height: 16px; display: flex; align-items: flex-end; padding-left: 6px; background: #ebe9e5; }
.inspector { flex: none; display: flex; border: 1px solid #77746e; height: 196px; overflow: hidden; margin-bottom: 3px; }
.props { flex: 1; border-collapse: collapse; table-layout: fixed; width: 0; background: #fff; }
.props td { height: 13px; line-height: 12px; border-bottom: 1px solid #cfccc5; white-space: nowrap; overflow: hidden; }
.props td:first-child { width: 61px; border-right: 1px solid #cfccc5; padding-left: 11px; position: relative; }
.props td:last-child { color: #101048; padding-left: 2px; }
.props .pm { position: absolute; left: 1px; top: 2px; }
.props tr.on td:first-child { background: #d4d0c8; }
.cellv { display: flex; align-items: center; gap: 2px; }
.cellv button { background: #d4d0c8; width: 11px; height: 11px; line-height: 6px; border: 1px solid #888; font-size: 8px; margin-left: -2px; }
.swatch { width: 8px; height: 8px; background: #000; }
input[type=checkbox] { appearance: none; width: 9px; height: 9px; border: 1px solid #888; background: #fff; flex: none; display: block; position: relative; }
input[type=checkbox]:checked::before { content: ""; position: absolute; left: 2px; top: 0; width: 3px; height: 5px; border: solid #000; border-width: 0 2px 2px 0; transform: rotate(40deg); }
.hint { flex: 1; min-height: 0; background: #fff; border: 1px solid #77746e; }
.hint b { display: block; font: 700 10px/14px "Noto Sans", sans-serif; background: #ffffe1; }
.hint p { line-height: 14px; }

/* report surface */
.design { flex: 1; min-width: 0; display: grid; grid-template: 16px 1fr / 22px 1fr 13px; }
.hruler { grid-column: 2 / 4; height: 12px; margin-left: 40px; background: #fff; display: flex; overflow: hidden; font: 8px/12px "Liberation Sans", sans-serif; padding: 0 8px 0 16px; }
.hruler span { flex: 1; text-align: center; background: linear-gradient(#333, #333) 0 4px / 1px 4px no-repeat; }
.vruler { margin: 40px 6px 0 5px; width: 11px; background: #fff; display: flex; flex-direction: column; padding-top: 16px; overflow: hidden; font: 8px/11px "Liberation Sans", sans-serif; }
.vruler span { flex: none; height: 30px; writing-mode: sideways-lr; text-align: center; background: linear-gradient(#333, #333) 4px 0 / 4px 1px no-repeat; }
.canvas { background: #808080; border: solid #6a6a6a; border-width: 1px 0 0 1px; padding: 7px 0 0 7px; overflow: hidden; min-height: 0; }
.paper { width: 636px; height: 100%; background: #fff; border: solid #222; border-width: 1px 0 0 1px; padding: 29px 29px 0 29px; overflow: hidden; }
.band { height: 15px; padding-left: 5px; background: #d4d0c8; border-top: 1px solid #aaa79f; font: 10px/14px "Noto Sans", sans-serif; white-space: nowrap; }
.master { background: #dca544; }
.bandbody { border: dotted #999; border-width: 0 1px; background: repeating-linear-gradient(90deg, transparent 0 29px, #efefef 29px 30px), repeating-linear-gradient(transparent 0 29px, #efefef 29px 30px); overflow: hidden; font-size: 11px; line-height: 12px; }
.title { height: 221px; padding-top: 5px; }
.brand { display: flex; align-items: center; gap: 6px; height: 24px; padding-left: 3px; color: #46a56d; }
.brand svg { width: 24px; height: 24px; }
.blankrow { margin-top: 35px; height: 22px; border: 1px solid #222; border-width: 1px 0; }
.contact { margin-top: 4px; border: 1px solid #222; border-right: 0; padding: 0 1px; height: 98px; box-shadow: inset 0 -5px #fff, inset 0 -6px #222; }
.contact p { line-height: 18px; white-space: nowrap; }
.head { height: 25px; }
.head .cells { height: 22px; line-height: 20px; }
.detail { height: 52px; }
.detail .cells { height: 19px; line-height: 11px; align-items: flex-end; border-top: 0; }
.cells { display: flex; border: 1px solid #222; overflow: hidden; }
.cells span { overflow: hidden; text-align: center; border-right: 1px solid #222; }
.cells span:last-child { border-right: 0; }
.no { width: 19px; padding: 0 3px; }
.item { width: 60px; }
.detail .item { width: 50px; }
.sum { height: 22px; }
.sum .cells { height: 20px; line-height: 18px; }
.c1 { width: 115px; }
.sum .c2 { width: 70px; line-height: 14px; white-space: normal; word-break: break-all; }
.c3 { width: 85px; white-space: nowrap; }
.c4 { flex: 1; white-space: nowrap; }
.child { height: 60px; padding: 4px 1px; }
.child p { white-space: pre; }

/* right side: data tree */
.right { flex: none; width: 123px; display: flex; flex-direction: column; margin-left: 4px; }
.right .smalltabs { height: 17px; background: none; padding-left: 8px; }
.datatree { flex: 1; background: #fff; border: 1px solid #77746e; border-right: 0; padding: 0 0 0 7px; font-weight: 700; overflow: hidden; }
.datatree li { height: 13px; display: flex; align-items: center; gap: 5px; white-space: nowrap; }
.datatree .root { margin-left: -4px; gap: 4px; }
.datatree svg { width: 12px; height: 12px; }
.opts { flex: none; height: 43px; padding: 3px; }
.opts label { display: flex; align-items: center; gap: 4px; height: 13px; }

/* status line and task bar */
.status { flex: none; height: 17px; display: flex; align-items: center; border-top: 1px solid #8e8b85; font: 10px/14px "Noto Sans", "Noto Sans CJK SC", sans-serif; }
.status span { display: flex; align-items: center; height: 13px; }
.unit { width: 54px; margin-left: -8px; flex: none; }
.pos { width: 190px; margin-left: 8px; padding-left: 2px; gap: 3px; border-left: 1px solid #8e8b85; }
.status .pg { flex: 1; padding-left: 1px; border-left: 1px solid #8e8b85; margin-left: -7px; }
.taskbar { flex: none; height: 15px; display: flex; align-items: flex-start; gap: 2px; border-top: 1px solid #f6f5f2; overflow: hidden; }
.taskbar button { height: 16px; display: flex; align-items: center; white-space: nowrap; border: 1px solid; border-color: #fff #444 #444 #fff; }
.start { width: 38px; margin-left: -6px; font-weight: 700; flex: none; }
.tsep { width: 5px; height: 16px; margin: 0 4px 0 2px; border: solid #aaa79f; border-width: 0 1px; flex: none; }
.taskbar .task { flex: 0 1 78px; gap: 4px; padding-left: 4px; overflow: hidden; }
.taskbar .cur { background: #fff; font-weight: 700; border-color: #444 #fff #fff #444; }
.lang { padding: 2px 0 0 15px; margin-right: 9px; flex: none; }
.kbd { margin: 1px 2px 0 0; }
.tray { flex: 1; height: 17px; display: flex; align-items: center; gap: 5px; padding-left: 4px; border-left: 1px solid #888; border-top: 1px solid #888; overflow: hidden; }
.tray time { margin-left: 5px; }

/* open dialog */
.dialog { position: absolute; left: 256px; top: 94px; width: 568px; background: #d4d0c8; border: 1px solid; border-color: #f4f3f0 #555 #555 #f4f3f0; box-shadow: 1px 1px #666; padding: 1px; }
.dialog header { height: 15px; display: flex; align-items: center; gap: 4px; padding: 0 3px; background: linear-gradient(90deg, #0a246a, #3f66b0 50%, #a6caf0); color: #fff; }
.dialog h2 { flex: 1; font-size: 11px; line-height: 15px; }
.frame { height: 303px; border: 2px solid #c08b62; box-shadow: inset 0 0 0 1px #6d5a4c; padding: 1px; display: flex; background: #fff; }
.scroller { flex: 1; overflow: hidden; }
.files { width: 537px; table-layout: fixed; border-collapse: separate; border-spacing: 0; }
.k1 { width: 262px; } .k2 { width: 68px; } .k3 { width: 112px; } .k4 { width: 51px; } .k5 { width: 44px; }
.files th { height: 14px; font-weight: 400; text-align: left; background: #d4d0c8; border: solid #333; border-width: 0 1px 1px 0; white-space: nowrap; overflow: hidden; padding-left: 1px; line-height: 13px; }
.files td { height: 16px; line-height: 15px; border: solid #a8a8a8; border-width: 0 1px 1px 0; white-space: nowrap; overflow: hidden; padding-left: 1px; }
.files td:first-child { border-bottom: 0; padding: 0; }
.files input { margin: 0 auto; }
.row { display: flex; height: 16px; padding-left: 7px; }
.guide { flex: none; width: 16px; border-left: 1px dotted #999; }
.elbow { flex: none; width: 8px; border-left: 1px dotted #999; background: repeating-linear-gradient(90deg, #999 0 1px, transparent 1px 2px) 0 8px / 8px 1px no-repeat; }
.row svg { width: 12px; height: 12px; margin: 2px 2px 0 1px; }
.row span { flex: 1; overflow: hidden; border: solid #a8a8a8; border-width: 0 0 1px 1px; padding-left: 1px; }
.sel td + td { background: #0a246a; color: #fff; }
.sel .row span { border: 1px dotted #222; line-height: 14px; }
.form { display: grid; grid-template-columns: 48px 192px 88px; column-gap: 15px; row-gap: 5px; justify-content: start; align-items: center; padding: 9px 0 12px 93px; }
.form label { white-space: nowrap; }
.form input { height: 15px; border: 1px solid #8f8c85; background: #d4d0c8; color: #8a8781; padding-left: 1px; min-width: 0; }
.form button { height: 18px; margin-left: 29px; width: 88px; border: 1px solid; border-color: #fff #77746e #77746e #fff; display: flex; align-items: center; justify-content: center; gap: 2px; }
.tip { height: 16px; line-height: 15px; border-top: 1px solid #99968f; padding-left: 1px; white-space: nowrap; overflow: hidden; }
.sizegrip { position: absolute; right: 2px; bottom: 2px; width: 10px; height: 10px; }
.pointer { position: absolute; left: 503px; top: 224px; width: 84px; height: 170px; pointer-events: none; }

/* screen recorder overlay */
.recorder { position: absolute; left: 917px; top: 49px; width: 138px; height: 35px; border-radius: 18px; background: #1f202e; display: flex; align-items: center; gap: 10px; }
.clock { width: 56px; height: 56px; margin-right: 1px; border-radius: 50%; background: #3b3d4d; color: #eee; display: grid; place-items: center; font: 11px/14px "Noto Sans", sans-serif; }
.recorder button { width: 14px; height: 14px; }
.recorder svg { width: 14px; height: 14px; }
```
FILE: script.js
```js
const icon = id => `<svg><use href="#${id}"/></svg>`;

document.querySelectorAll('[data-icons]').forEach(bar => {
  const html = bar.dataset.icons.split(' ').map(id => {
    if (id === '|') return '<span class="sep"></span>';
    if (id === 'v') return '<button class="arrow" aria-label="更多"></button>';
    const held = id === 'grid' || id === 'snap' ? ' held' : '';
    return `<button class="tb${held}" aria-label="${id}">${icon(id)}</button>`;
  }).join('');
  bar.insertAdjacentHTML('afterbegin', html);
});

document.querySelectorAll('[data-tools]').forEach(col => {
  col.innerHTML = col.dataset.tools.split(' ').map(id => `<button aria-label="${id}">${icon(id)}</button>`).join('');
});

const ruler = (id, count) => {
  document.getElementById(id).innerHTML = Array.from({ length: count }, (_, n) => `<span>${n + 1}</span>`).join('');
};
ruler('hruler', 24);
ruler('vruler', 14);

const memos = ['Memo2', 'Memo5', 'Memo7', 'Memo8', 'Memo3', 'Memo4', 'Memo9', 'Memo10', 'Memo6', 'Memo11'];
document.getElementById('objtree').innerHTML =
  `<li class="n1"><i class="pm"></i>${icon('page')}<span class="on">Page1</span></li>` +
  `<li class="n2"><i class="pm"></i>${icon('band')}ReportTitle1</li>` +
  `<li class="n3">${icon('pic')}Picture1</li>` +
  memos.map(m => `<li class="n3">${icon('memo')}${m}</li>`).join('');

const box = on => `<input type="checkbox" aria-label="值"${on ? ' checked' : ''}>${on ? 'True' : 'False'}`;
const props = [
  ['BackPicture', '(未设置)<button aria-label="浏览">…</button>'],
  ['BackPictureP', box(true)], ['BackPictureV', box(true)],
  ['BottomMargin', '1'], ['Color', '<i class="swatch"></i>clNone'], ['Columns', '0'],
  ['DataSet', '(未设置)'], ['Duplex', 'dmNone'],
  ['EndlessHeight', box(false)], ['EndlessWidth', box(false)],
  ['+Font', '(TFont)'], ['+Frame', '(TfrxFrame)'],
  ['LargeDesign', box(true)], ['LeftMargin', '1'], ['MirrorMargin', box(false)]
];
document.getElementById('props').innerHTML = props.map(([k, v], n) => {
  const name = k[0] === '+' ? `<i class="pm plus"></i>${k.slice(1)}` : k;
  return `<tr${n ? '' : ' class="on"'}><td>${name}</td><td><div class="cellv">${v}</div></td></tr>`;
}).join('');

const files = [
  [2, '01. 将窗体做为查询条件,最终查出数据,并以报表用', '2018-06-21 23:02:30.95'],
  [2, '01. 将窗体做为查询条件,最终查出数据,并以报表用', '2018-07-11 19:46:29.33'],
  [2, '02. 将窗体做为查询条件,最终查出数据,并以表格用', '2018-06-21 22:56:20.43'],
  [2, '03. 如何调用ERP的标准查询模块', '2018-06-21 23:18:47.16'],
  [2, '04. 如何按回车键,输入焦点跳到下一个框', '2018-06-21 23:28:52.68'],
  [2, '05. 如何布局窗体,并创建一个树形表', '2018-06-22 00:21:21.93'],
  [2, '06. 如何给表格,加一个右键菜单', '2018-06-22 14:10:14.89'],
  [2, '07. 如何保存一个值在本地文件中,然后再读出来', '2018-07-13 17:41:07.95'],
  [2, '08. 定时器(设定指定时间后,执行某个代码;可以只', '2018-07-13 17:48:04.68'],
  [2, '08. 定时器.读取工单信息并显示', '2019-06-01 23:30:15.30'],
  [2, '09. 如何布局一个窗体,并保存数据,最后打印', '2018-06-24 16:17:41.18'],
  [2, '09. 如何布局一个窗体,并保存数据,最后打印(打印', '2018-07-11 19:46:29.55'],
  [2, '10. 如何记住上次的输入焦点', '2018-11-02 11:21:16.97'],
  [1, '_教程__外协加工', '2018-06-12 16:03:36.43'],
  [1, 'A4__北京视通', '2018-06-12 15:12:21.39'],
  [1, 'A4__广州航辉', '2018-06-12 15:12:21.96'],
  [1, 'A4__广州佳HE', '2018-06-12 15:12:21.87'],
  [1, 'A4__惠州和致', '2018-06-12 15:12:22.14']
];
document.getElementById('files').innerHTML = files.map(([level, name, time], n) => {
  const guide = level === 2 ? '<i class="guide"></i>' : '';
  return `<tr${n === 16 ? ' class="sel"' : ''}><td><div class="row">${guide}<i class="elbow"></i>${icon('rr')}<span>${name}</span></div></td>` +
    `<td>ADMIN</td><td>${time}</td><td><input type="checkbox" aria-label="系统只读"></td><td><input type="checkbox" aria-label="加密"></td></tr>`;
}).join('');
```
